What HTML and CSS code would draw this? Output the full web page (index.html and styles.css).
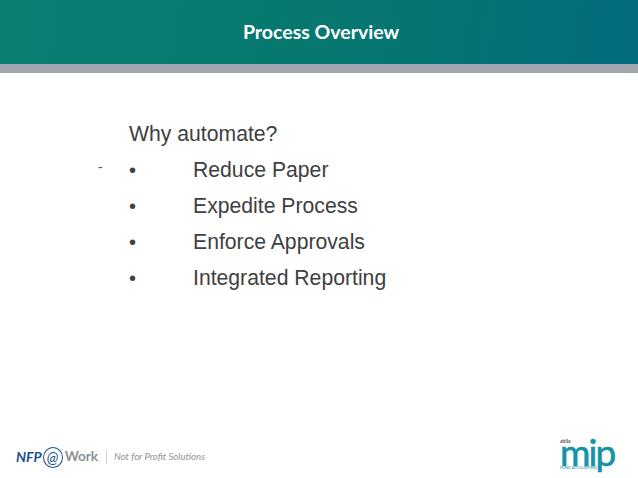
FILE: index.html
```html
<!DOCTYPE html>
<html lang="en">
<head>
<meta charset="utf-8">
<title>Process Overview</title>
<link rel="stylesheet" href="styles.css">
</head>
<body>
<div class="slide">
  <header class="banner"><h1 class="title">Process Overview</h1></header>
  <div class="rule"></div>
  <main class="content">
    <div class="row"><span class="dash"></span><span class="lead">Why automate?</span></div>
    <div class="row"><span class="dash">-</span><span class="bullet">•</span><span>Reduce Paper</span></div>
    <div class="row"><span class="dash"></span><span class="bullet">•</span><span>Expedite Process</span></div>
    <div class="row"><span class="dash"></span><span class="bullet">•</span><span>Enforce Approvals</span></div>
    <div class="row"><span class="dash"></span><span class="bullet">•</span><span>Integrated Reporting</span></div>
  </main>
  <footer class="footer">
    <div class="nfp">
      <span class="nfp-name">NFP</span>
      <span class="nfp-at">@</span>
      <span class="nfp-work">Work</span>
      <span class="nfp-sep"></span>
      <span class="nfp-tag">Not for Profit Solutions</span>
    </div>
    <div class="mip">
      <span class="mip-abila">abila</span>
      <span class="mip-name">mip</span>
      <span class="mip-sub">FUND ACCOUNTING</span>
    </div>
  </footer>
</div>
</body>
</html>
```
FILE: styles.css
```css
html, body { margin: 0; padding: 0; background: #fff; }
.slide {
  width: 638px;
  height: 478px;
  display: flex;
  flex-direction: column;
  overflow: hidden;
  background: #fff;
}
.banner {
  height: 64px;
  flex: none;
  display: flex;
  align-items: center;
  justify-content: center;
  padding-left: 4px;
  box-sizing: border-box;
  background: linear-gradient(100deg, #088070 0%, #06786f 50%, #026c7c 100%);
}
.title {
  margin: 0;
  font: 700 19.5px/1 "Lato", sans-serif;
  color: #fff;
}
.rule { height: 8.5px; flex: none; background: #a0a5ae; }
.content {
  flex: 1;
  padding-top: 43.5px;
  font: 21.2px/36px "Liberation Sans", sans-serif;
  color: #404040;
}
.row { display: flex; height: 36px; }
.dash { width: 129px; flex: none; box-sizing: border-box; padding-left: 98px; font-size: 14px; line-height: 30px; color: #555; }
.bullet { width: 64px; flex: none; font-size: 20px; }
.footer {
  flex: none;
  height: 48px;
  display: flex;
  justify-content: space-between;
  padding: 0 25px 8px 16px;
  box-sizing: border-box;
  align-items: flex-end;
}
.nfp { display: flex; align-items: center; height: 26px; font-family: "Lato", sans-serif; }
.nfp-name { font: italic 700 14px/1 "Lato", sans-serif; color: #1c4f8c; }
.nfp-at {
  width: 20px; height: 21px; margin: 0 2px 0 1px;
  display: flex; align-items: center; justify-content: center;
  border: 1px solid #1c4f8c; border-radius: 50%; box-sizing: border-box;
  font: italic 400 15px/1 "Lato", sans-serif; color: #1c4f8c;
}
.nfp-work { font: 700 13.5px/1 "Lato", sans-serif; color: #8b9097; }
.nfp-sep { width: 1px; height: 14px; background: #cfd2d6; margin: 0 7px 0 8px; }
.nfp-tag { font: italic 400 9.6px/1 "Lato", sans-serif; color: #8f9398; }
.mip { width: 53px; display: flex; flex-direction: column; color: #1393a4; }
.mip-abila { font: 700 5px/5px "Lato", sans-serif; color: #555; }
.mip-name { font: 400 37px/15px "Lato", sans-serif; letter-spacing: -1.9px; margin-bottom: 6px; -webkit-text-stroke: 0.6px #1393a4; }
.mip-sub { font: 400 4px/5px "Lato", sans-serif; letter-spacing: -0.15px; color: #1393a4; white-space: nowrap; width: 38px; overflow: hidden; }
```
